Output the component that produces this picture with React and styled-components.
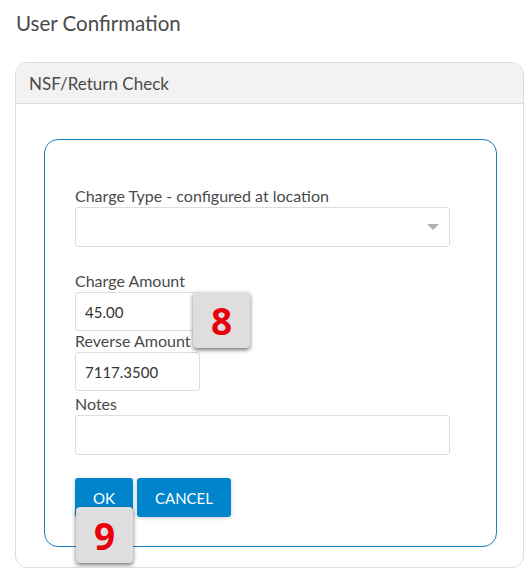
import React from "react";
import styled, { createGlobalStyle } from "styled-components";

const Global = createGlobalStyle`
  html, body { margin: 0; padding: 0; background: #fff; }
  body { font-family: Lato, "Open Sans", sans-serif; color: #444; }
  * { box-sizing: border-box; }
`;

const Page = styled.div`
  width: 531px;
  padding: 0 7px 14px 15px;
`;

const Title = styled.h1`
  margin: 0;
  padding: 11px 0 0 1px;
  height: 62px;
  font-size: 20.5px;
  font-weight: 400;
  line-height: 24px;
  color: #4a4a4a;
`;

const Panel = styled.section`
  border: 1px solid #dddddd;
  border-radius: 12px;
  overflow: hidden;
`;

const PanelHeader = styled.div`
  height: 41px;
  background: #f2f2f2;
  border-bottom: 1px solid #dddddd;
  padding: 0 13px;
  display: flex;
  align-items: center;
  font-size: 17px;
  color: #4a4a4a;
`;

const PanelBody = styled.div`
  padding: 35px 26px 20px 28px;
`;

const Box = styled.div`
  border: 1px solid #1a80c4;
  border-radius: 14px;
  padding: 46px 30px 29px 30px;
`;

const Field = styled.div`
  display: flex;
  flex-direction: column;
  margin-top: ${(p) => p.$gap || 0}px;
`;

const Label = styled.label`
  font-size: 16px;
  line-height: 20px;
  color: #4a4a4a;
  margin-bottom: 1px;
`;

const Anchor = styled.div`
  position: relative;
  width: ${(p) => p.$w}px;
`;

const Input = styled.div`
  width: ${(p) => p.$w}px;
  height: ${(p) => p.$h}px;
  border: 1px solid #dddddd;
  border-radius: 3px;
  padding: 0 9px;
  display: flex;
  align-items: center;
  font-size: 15px;
  color: #333;
  background: #fff;
`;

const Select = styled(Input)`
  justify-content: flex-end;
  padding-right: 10px;
`;

const Caret = styled.span`
  width: 0;
  height: 0;
  border-left: 6px solid transparent;
  border-right: 6px solid transparent;
  border-top: 6px solid #b0b0b0;
`;

const Badge = styled.div`
  position: absolute;
  left: ${(p) => p.$x}px;
  top: ${(p) => p.$y}px;
  width: 57px;
  height: 56px;
  background: #dfdddd;
  border-radius: 4px;
  box-shadow: 0 2px 4px rgba(0, 0, 0, 0.55);
  display: flex;
  align-items: center;
  justify-content: center;
  font-family: "Open Sans", Lato, sans-serif;
  font-weight: 700;
  font-size: 37px;
  color: #e8000b;
  z-index: 2;
`;

const Buttons = styled.div`
  position: relative;
  display: flex;
  gap: 4px;
  margin-top: 23px;
`;

const Button = styled.button`
  height: 39px;
  padding: 0 ${(p) => p.$px}px;
  border: none;
  border-radius: 3px;
  background: #0085cc;
  color: #fff;
  font-family: Lato, sans-serif;
  font-size: 15px;
  text-transform: uppercase;
  box-shadow: 0 1px 4px rgba(0, 0, 0, 0.2);
`;

export default function App() {
  return (
    <Page>
      <Global />
      <Title>User Confirmation</Title>
      <Panel>
        <PanelHeader>NSF/Return Check</PanelHeader>
        <PanelBody>
          <Box>
            <Field>
              <Label>Charge Type - configured at location</Label>
              <Select $w={375} $h={40}>
                <Caret />
              </Select>
            </Field>
            <Field $gap={24}>
              <Label>Charge Amount</Label>
              <Anchor $w={375}>
                <Input $w={125} $h={39}>45.00</Input>
                <Badge $x={118} $y={0}>8</Badge>
              </Anchor>
            </Field>
            <Field>
              <Label>Reverse Amount</Label>
              <Input $w={125} $h={39}>7117.3500</Input>
            </Field>
            <Field $gap={3}>
              <Label>Notes</Label>
              <Input $w={375} $h={40} />
            </Field>
            <Buttons>
              <Button $px={18}>OK</Button>
              <Button $px={18}>Cancel</Button>
              <Badge $x={1} $y={29}>9</Badge>
            </Buttons>
          </Box>
        </PanelBody>
      </Panel>
    </Page>
  );
}
